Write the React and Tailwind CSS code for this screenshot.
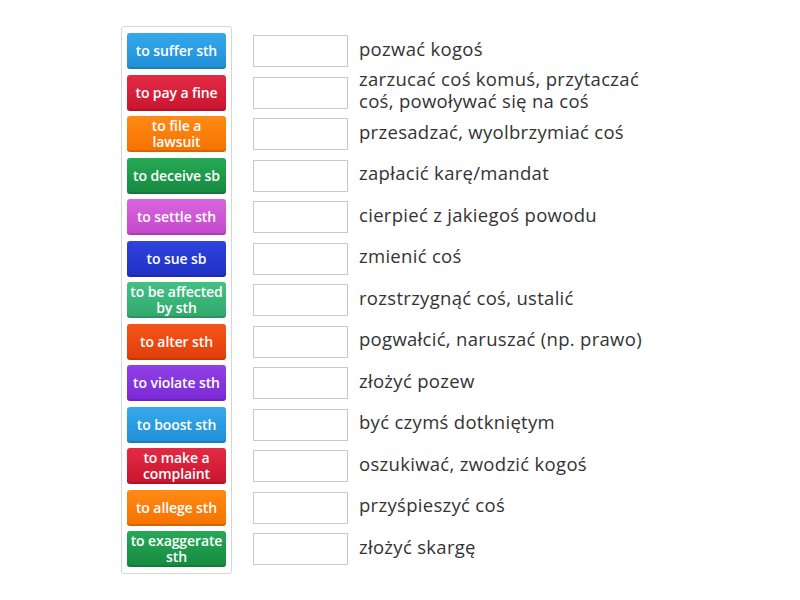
import React from "react";

const items = [
  ["to suffer sth", "from-[#35a9ec] to-[#1f8fd6]"],
  ["to pay a fine", "from-[#e42a45] to-[#c8142e]"],
  ["to file a lawsuit", "from-[#ff8a14] to-[#f57200]"],
  ["to deceive sb", "from-[#26a955] to-[#168a40]"],
  ["to settle sth", "from-[#d866dd] to-[#c447cc]"],
  ["to sue sb", "from-[#2f43dd] to-[#1f2fc4]"],
  ["to be affected by sth", "from-[#45c085] to-[#30a86c]"],
  ["to alter sth", "from-[#f5541a] to-[#e03e08]"],
  ["to violate sth", "from-[#9140e6] to-[#7a28d4]"],
  ["to boost sth", "from-[#35a9ec] to-[#1f8fd6]"],
  ["to make a complaint", "from-[#e42a45] to-[#c8142e]"],
  ["to allege sth", "from-[#ff8a14] to-[#f57200]"],
  ["to exaggerate sth", "from-[#26a955] to-[#168a40]"],
];

const defs = [
  ["pozwać kogoś"],
  ["zarzucać coś komuś, przytaczać", "coś, powoływać się na coś"],
  ["przesadzać, wyolbrzymiać coś"],
  ["zapłacić karę/mandat"],
  ["cierpieć z jakiegoś powodu"],
  ["zmienić coś"],
  ["rozstrzygnąć coś, ustalić"],
  ["pogwałcić, naruszać (np. prawo)"],
  ["złożyć pozew"],
  ["być czymś dotkniętym"],
  ["oszukiwać, zwodzić kogoś"],
  ["przyśpieszyć coś"],
  ["złożyć skargę"],
];

export default function App() {
  return (
    <div className="w-[800px] h-[600px] bg-white flex items-start pt-[26px] pl-[121px]" style={{ fontFamily: "'Open Sans', Lato, sans-serif" }}>
      <div className="w-[111px] border border-[#d6d6d6] rounded-[3px] px-[5px] pt-[6px] pb-[6px] flex flex-col gap-[5.5px]">
        {items.map(([t, c], i) => (
          <div
            key={i}
            className={`h-[36px] rounded-[3px] bg-gradient-to-b ${c} text-white text-[14px] leading-[16px] font-semibold text-center flex items-center justify-center px-[2px] tracking-[-0.1px] shadow-[inset_0_-2px_0_rgba(0,0,0,0.12)]`}
          >
            {t}
          </div>
        ))}
      </div>
      <div className="ml-[21px] pt-[9px] flex flex-col gap-[9.5px]">
        {defs.map((d, i) => (
          <div key={i} className="h-[32px] flex items-center">
            <div className="w-[95px] h-[32px] border border-[#c8c8c8] bg-white shrink-0" />
            <div className="ml-[11px] mb-[5px] text-[18.5px] leading-[22px] tracking-[0.3px] text-[#333] whitespace-nowrap">
              {d.map((l, j) => (
                <div key={j}>{l}</div>
              ))}
            </div>
          </div>
        ))}
      </div>
    </div>
  );
}
